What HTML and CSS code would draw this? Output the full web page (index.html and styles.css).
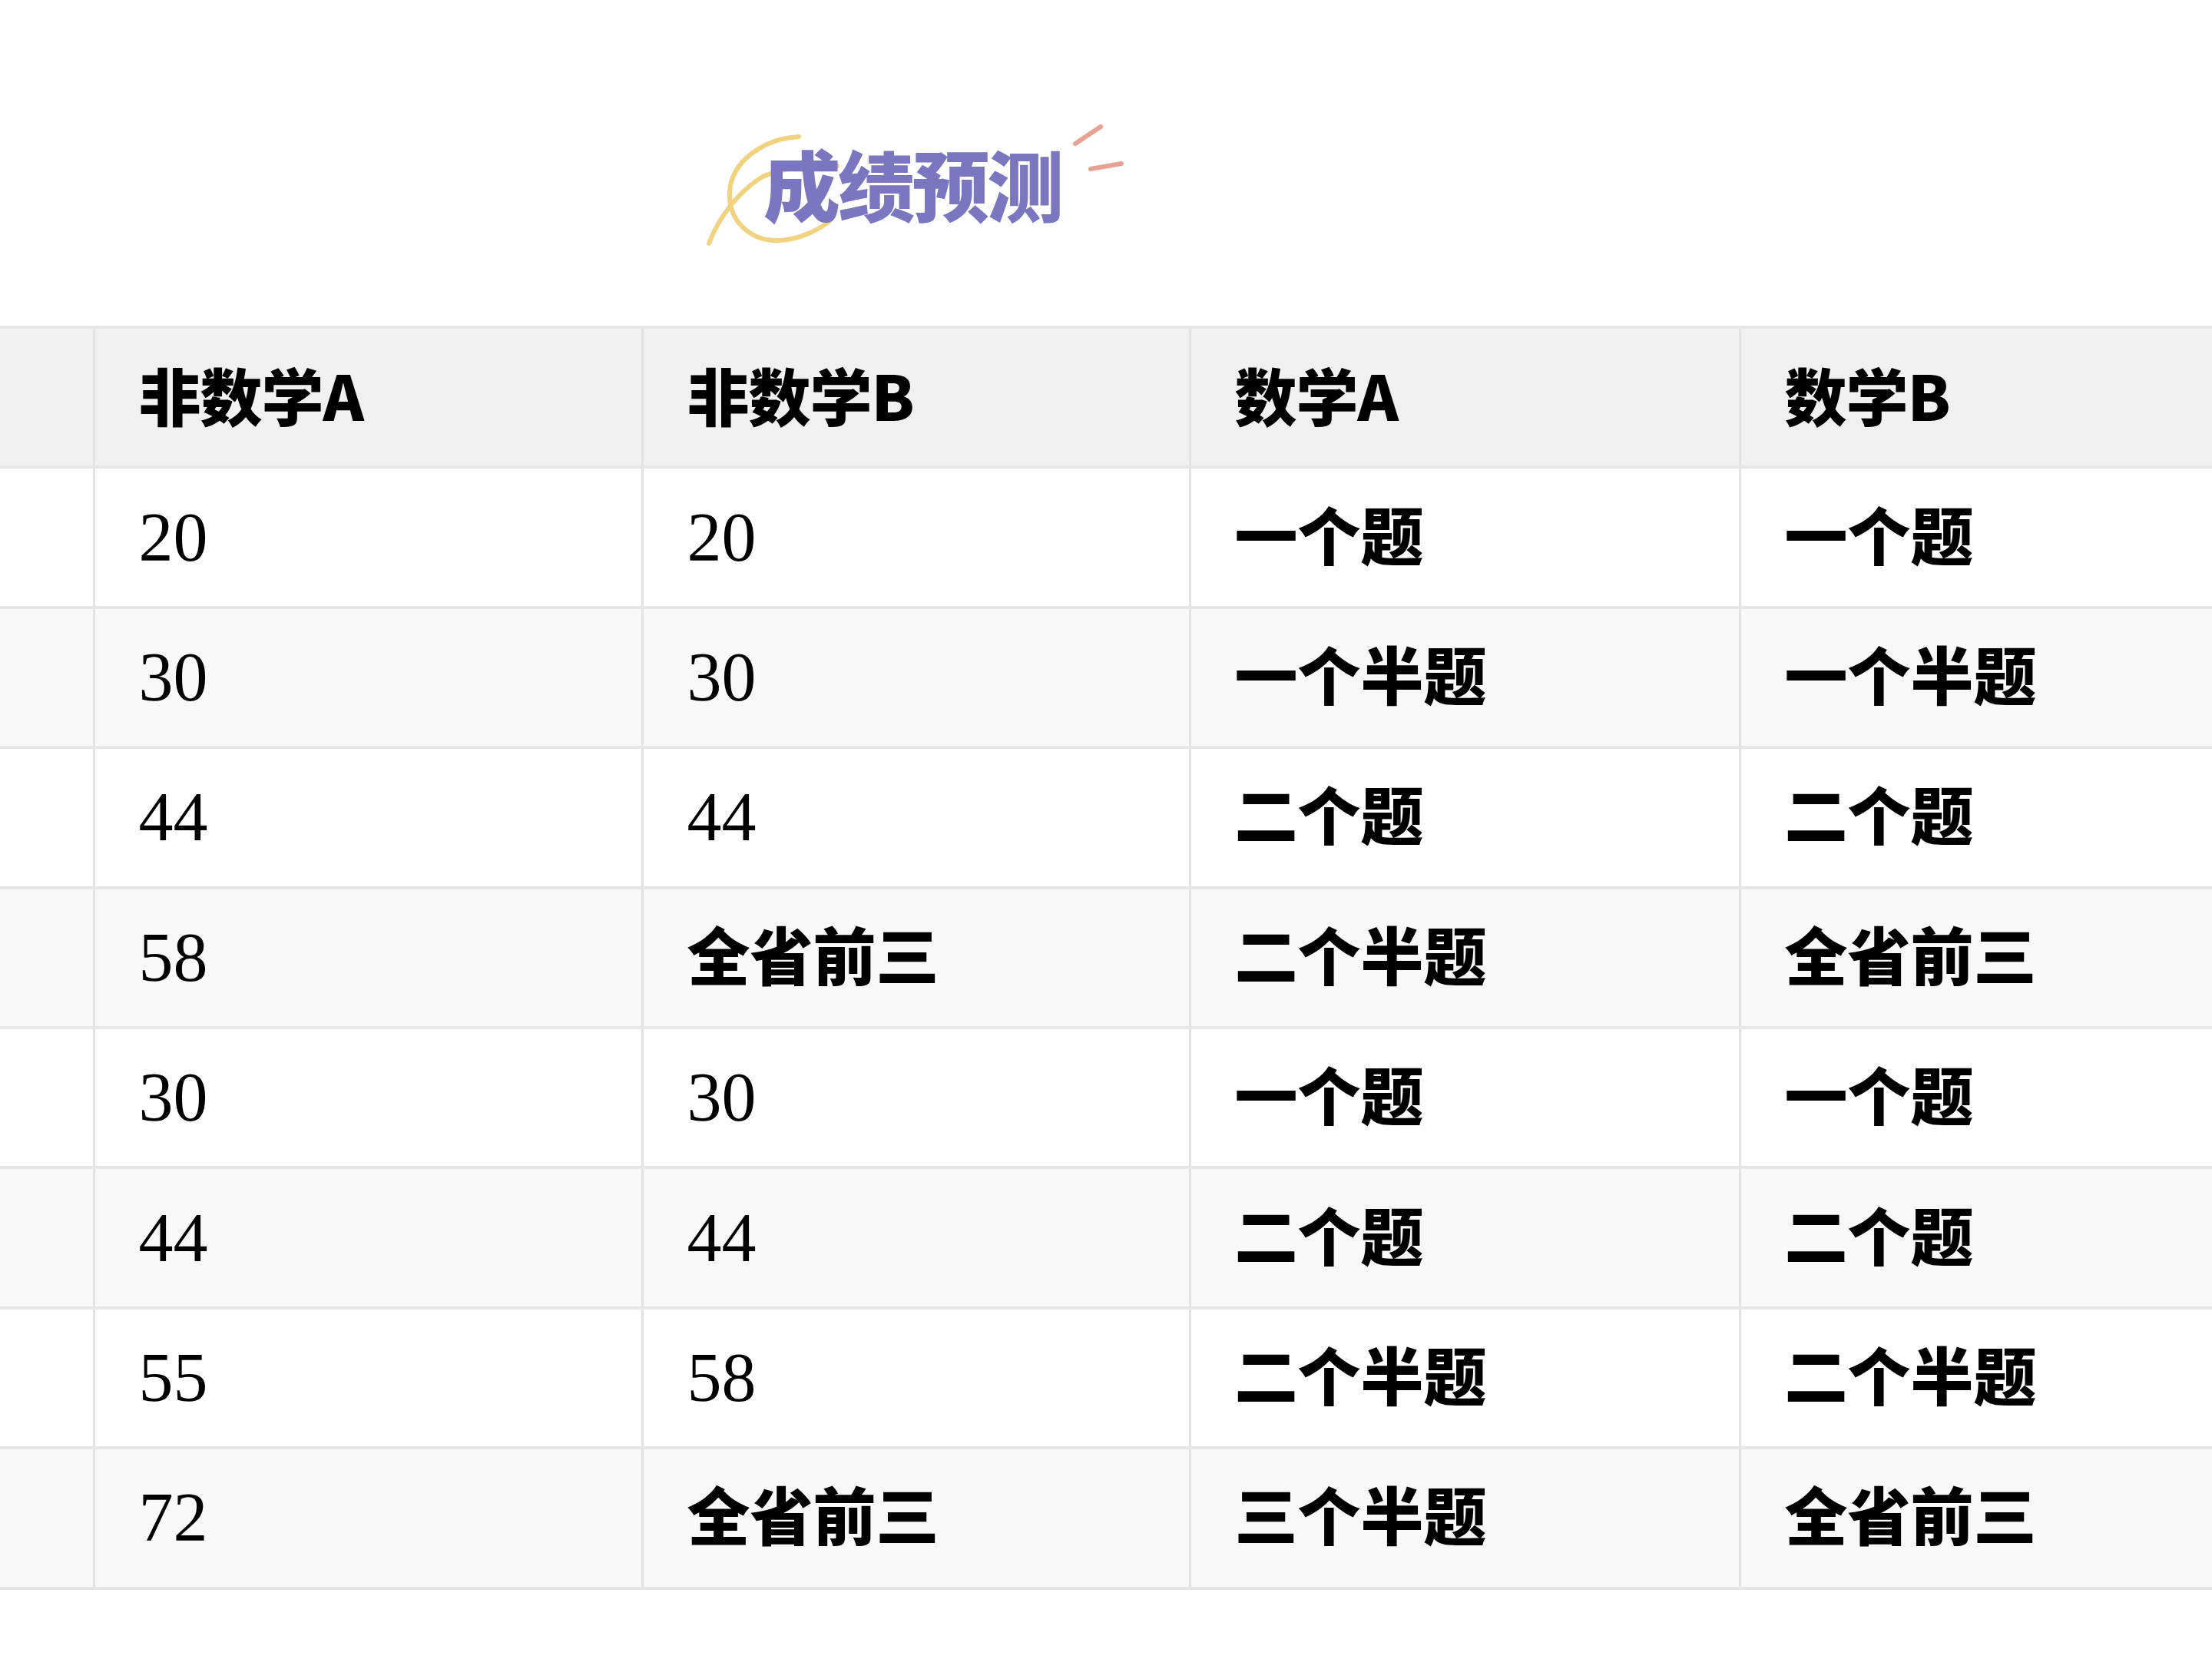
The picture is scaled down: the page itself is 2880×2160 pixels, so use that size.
FILE: index.html
```html
<!DOCTYPE html>
<html lang="zh-CN">
<head>
<meta charset="utf-8">
<title>成绩预测</title>
<link rel="stylesheet" href="styles.css">
</head>
<body>
<header class="title-area">
  <div class="title">
    <svg class="deco" width="600" height="200" viewBox="0 0 600 200" aria-hidden="true">
      <path class="swirl" d="M140,38 C95,40 52,70 50,110 C48,150 80,175 115,173 C140,172 165,160 180,148"/>
      <path class="swirl" d="M23,177 C35,145 60,110 93,90 C115,80 150,74 190,76"/>
      <path class="spark" d="M500,47 L533,25"/>
      <path class="spark" d="M520,80 L560,73"/>
    </svg>
    <h1>成绩预测</h1>
  </div>
</header>
<table class="grid">
  <colgroup>
    <col class="c0"><col class="c1"><col class="c2"><col class="c3"><col class="c4">
  </colgroup>
  <thead>
    <tr><th></th><th>非数学A</th><th>非数学B</th><th>数学A</th><th>数学B</th></tr>
  </thead>
  <tbody>
    <tr><td></td><td>20</td><td>20</td><td class="b">一个题</td><td class="b">一个题</td></tr>
    <tr><td></td><td>30</td><td>30</td><td class="b">一个半题</td><td class="b">一个半题</td></tr>
    <tr><td></td><td>44</td><td>44</td><td class="b">二个题</td><td class="b">二个题</td></tr>
    <tr><td></td><td>58</td><td class="b">全省前三</td><td class="b">二个半题</td><td class="b">全省前三</td></tr>
    <tr><td></td><td>30</td><td>30</td><td class="b">一个题</td><td class="b">一个题</td></tr>
    <tr><td></td><td>44</td><td>44</td><td class="b">二个题</td><td class="b">二个题</td></tr>
    <tr><td></td><td>55</td><td>58</td><td class="b">二个半题</td><td class="b">二个半题</td></tr>
    <tr><td></td><td>72</td><td class="b">全省前三</td><td class="b">三个半题</td><td class="b">全省前三</td></tr>
  </tbody>
</table>
</body>
</html>
```
FILE: styles.css
```css
html, body {
  margin: 0;
  padding: 0;
  background: #ffffff;
  overflow: hidden;
}
body {
  width: 2880px;
  height: 2160px;
  font-family: "Liberation Serif", "Noto Sans CJK SC", serif;
  color: #000;
}
.title-area {
  height: 426px;
  box-sizing: border-box;
  padding: 188px 0 0 994px;
}
.title {
  position: relative;
  display: inline-block;
}
.title h1 {
  position: relative;
  margin: 0;
  font-family: "Noto Sans CJK SC", sans-serif;
  font-weight: 900;
  font-size: 100px;
  line-height: 100px;
  color: #7b76c0;
  letter-spacing: -3px;
}
.deco {
  position: absolute;
  left: -94px;
  top: -48px;
}
.swirl {
  fill: none;
  stroke: #f1d27e;
  stroke-width: 6;
  stroke-linecap: round;
}
.spark {
  fill: none;
  stroke: #e9a291;
  stroke-width: 6;
  stroke-linecap: round;
}
.grid {
  border-collapse: collapse;
  table-layout: fixed;
  width: 2981px;
  margin-top: -2px;
}
.c0 { width: 122px; }
.c1 { width: 714px; }
.c2 { width: 713px; }
.c3 { width: 716px; }
.c4 { width: 716px; }
.grid th, .grid td {
  height: 182.4px;
  box-sizing: border-box;
  padding: 0 0 0 57px;
  text-align: left;
  vertical-align: middle;
  border-top: 4px solid #e6e6e6;
  border-bottom: 4px solid #e6e6e6;
  border-left: 3px solid #e2e2e2;
  border-right: 3px solid #e2e2e2;
  white-space: nowrap;
  overflow: hidden;
}
.grid tr > :first-child { border-left: none; }
.grid th {
  background: #f0f0f0;
  font-family: "Noto Sans CJK SC", sans-serif;
  font-weight: 900;
  font-size: 81px;
  line-height: 1;
  padding-bottom: 10px;
  letter-spacing: -1px;
}
.grid td {
  font-size: 90px;
  font-weight: 400;
  line-height: 1;
}
.grid td.b {
  font-family: "Noto Sans CJK SC", sans-serif;
  font-weight: 900;
  font-size: 82px;
  padding-bottom: 12px;
}
.grid tbody tr:nth-child(odd) td { background: #ffffff; }
.grid tbody tr:nth-child(even) td { background: #f8f8f8; }
```
